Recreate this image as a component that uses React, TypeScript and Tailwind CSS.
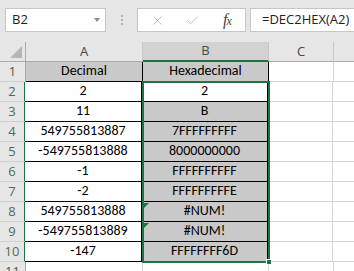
import { FC } from "react";
import { X, Check } from "lucide-react";

const rows: [string, string][] = [
  ["Decimal", "Hexadecimal"],
  ["2", "2"],
  ["11", "B"],
  ["549755813887", "7FFFFFFFFF"],
  ["-549755813888", "8000000000"],
  ["-1", "FFFFFFFFFF"],
  ["-2", "FFFFFFFFFE"],
  ["549755813888", "#NUM!"],
  ["-549755813889", "#NUM!"],
  ["-147", "FFFFFFFF6D"],
];

const uiFont = "font-['Open_Sans',sans-serif]";
const cellFont = "font-['Carlito','Lato',sans-serif]";

type RowProps = {
  num: number;
  a?: string;
  b?: string;
};

const SheetRow: FC<RowProps> = ({ num, a, b }) => {
  const inTable = a !== undefined;
  const selected = num >= 2 && num <= 10;
  const isHeader = num === 1;
  const bGray = inTable && num !== 2;
  const hasError = b === "#NUM!";

  return (
    <div className="flex h-[20px]">
      <div
        className={`w-[26px] shrink-0 flex items-center justify-center text-[13px] bg-[#e6e6e6] border-b border-[#d0d0d0] ${uiFont} ${
          selected
            ? "border-r-2 border-r-[#217346] text-[#4f6a58]"
            : "border-r border-r-[#ababab] text-[#555]"
        }`}
      >
        {num}
      </div>
      <div
        className={`w-[117px] shrink-0 flex items-end justify-center pb-[1px] text-[14px] leading-[18px] text-black ${cellFont} ${
          inTable
            ? `border-r border-b border-black ${isHeader ? "bg-[#c9c9c9]" : "bg-white"}`
            : "border-r border-b border-[#d4d4d4] bg-white"
        } ${selected ? "-ml-px" : ""}`}
      >
        {a}
      </div>
      <div
        className={`relative w-[126px] shrink-0 flex items-end justify-center pb-[1px] text-[14px] leading-[18px] text-black ${cellFont} ${
          inTable
            ? `border-r border-b border-black ${bGray ? "bg-[#c9c9c9]" : "bg-white"}`
            : "border-r border-b border-[#d4d4d4] bg-white"
        }`}
      >
        {hasError && (
          <span className="absolute left-[2px] top-[1px] w-0 h-0 border-t-[5px] border-t-[#217346] border-r-[5px] border-r-transparent" />
        )}
        {b}
      </div>
      <div className="w-[65px] shrink-0 border-r border-b border-[#d4d4d4] bg-white" />
      <div className="flex-1 border-b border-[#d4d4d4] bg-white" />
    </div>
  );
};

const App: FC = () => {
  return (
    <div className="relative w-[354px] h-[271px] overflow-hidden bg-white">
      <div className={`h-[42px] bg-[#e6e6e6] flex items-start pt-[8px] pl-[5px] ${uiFont}`}>
        <div className="w-[101px] h-[24px] shrink-0 bg-white border border-[#c6c6c6] flex items-center justify-between pl-[6px] pr-[5px]">
          <span className="text-[13px] text-[#222]">B2</span>
          <span className="w-0 h-0 border-l-[3.5px] border-l-transparent border-r-[3.5px] border-r-transparent border-t-[4px] border-t-[#8a8a8a]" />
        </div>
        <div className="w-[31px] h-[24px] shrink-0 flex flex-col items-center justify-center gap-[2px]">
          <span className="w-[2px] h-[2px] bg-[#b3b3b3]" />
          <span className="w-[2px] h-[2px] bg-[#b3b3b3]" />
          <span className="w-[2px] h-[2px] bg-[#b3b3b3]" />
        </div>
        <div className="w-[109px] h-[24px] shrink-0 bg-white border border-[#c6c6c6] flex items-center">
          <X size={15} strokeWidth={1.3} className="ml-[12px] text-[#b0b0b0]" />
          <Check size={15} strokeWidth={1.3} className="ml-[20px] text-[#b0b0b0]" />
          <span className="ml-[23px] text-[16px] italic text-[#444] font-['Liberation_Serif',serif] tracking-[-1px]">
            f<span className="text-[12px]">x</span>
          </span>
        </div>
        <div className="ml-[4px] flex-1 h-[24px] bg-white border border-r-0 border-[#c6c6c6] flex items-center pl-[11px]">
          <span className="text-[13px] text-[#222] whitespace-nowrap">=DEC2HEX(A2)</span>
        </div>
      </div>

      <div className={`flex h-[20px] text-[13px] ${uiFont}`}>
        <div className="w-[26px] shrink-0 bg-[#e6e6e6] border-r border-b border-[#ababab] flex items-end justify-end pr-[3px] pb-[3px]">
          <span className="w-0 h-0 border-l-[12px] border-l-transparent border-b-[12px] border-b-[#b5b5b5]" />
        </div>
        <div className="w-[117px] shrink-0 bg-[#e6e6e6] border-r border-b border-r-[#c8c8c8] border-b-[#ababab] flex items-center justify-center text-[#444]">
          A
        </div>
        <div className="w-[126px] shrink-0 bg-[#d2d2d2] border-r border-r-[#c8c8c8] border-b-2 border-b-[#217346] flex items-center justify-center text-[#2e5a3e]">
          B
        </div>
        <div className="w-[65px] shrink-0 bg-[#e6e6e6] border-r border-b border-r-[#c8c8c8] border-b-[#ababab] flex items-center justify-center text-[#444]">
          C
        </div>
        <div className="flex-1 bg-[#e6e6e6] border-b border-[#ababab]" />
      </div>

      {rows.map(([a, b], i) => (
        <SheetRow key={i} num={i + 1} a={a} b={b} />
      ))}
      <SheetRow num={11} />

      <div className="absolute left-[142px] top-[81px] w-[128px] h-[182px] border-2 border-[#217346] pointer-events-none" />
      <div className="absolute left-[266px] top-[259px] w-[6px] h-[6px] bg-[#217346] border border-white" />
    </div>
  );
};

export default App;
